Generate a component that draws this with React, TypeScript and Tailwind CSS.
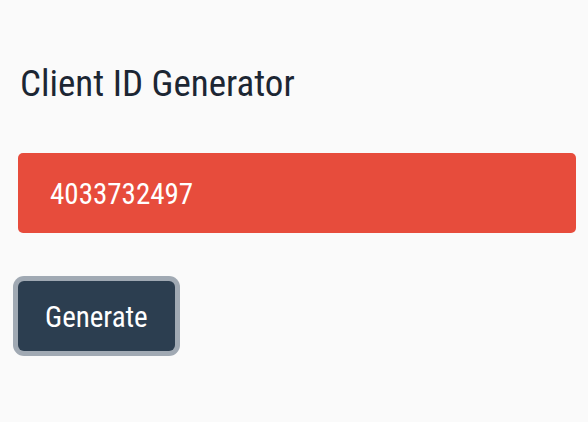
export default function App() {
  return (
    <div className="min-h-[422px] bg-[#fafafa] pl-[18px] pr-[12px] pt-[62px] font-['Roboto_Condensed',Roboto,sans-serif] [font-stretch:condensed]">
      <h1 className="pl-[2px] text-[37px] leading-[44px] text-[#1c2633]">Client ID Generator</h1>
      <div className="mt-[47px] flex h-[80px] items-center rounded-[5px] bg-[#e74c3c] pl-[32px] pt-[3px] text-[29px] text-white">
        4033732497
      </div>
      <button className="mt-[48px] h-[70px] rounded-[6px] bg-[#2c3e50] px-[27px] pt-[3px] text-[29px] text-white ring-[5px] ring-[#a0a9b3]">
        Generate
      </button>
    </div>
  )
}
